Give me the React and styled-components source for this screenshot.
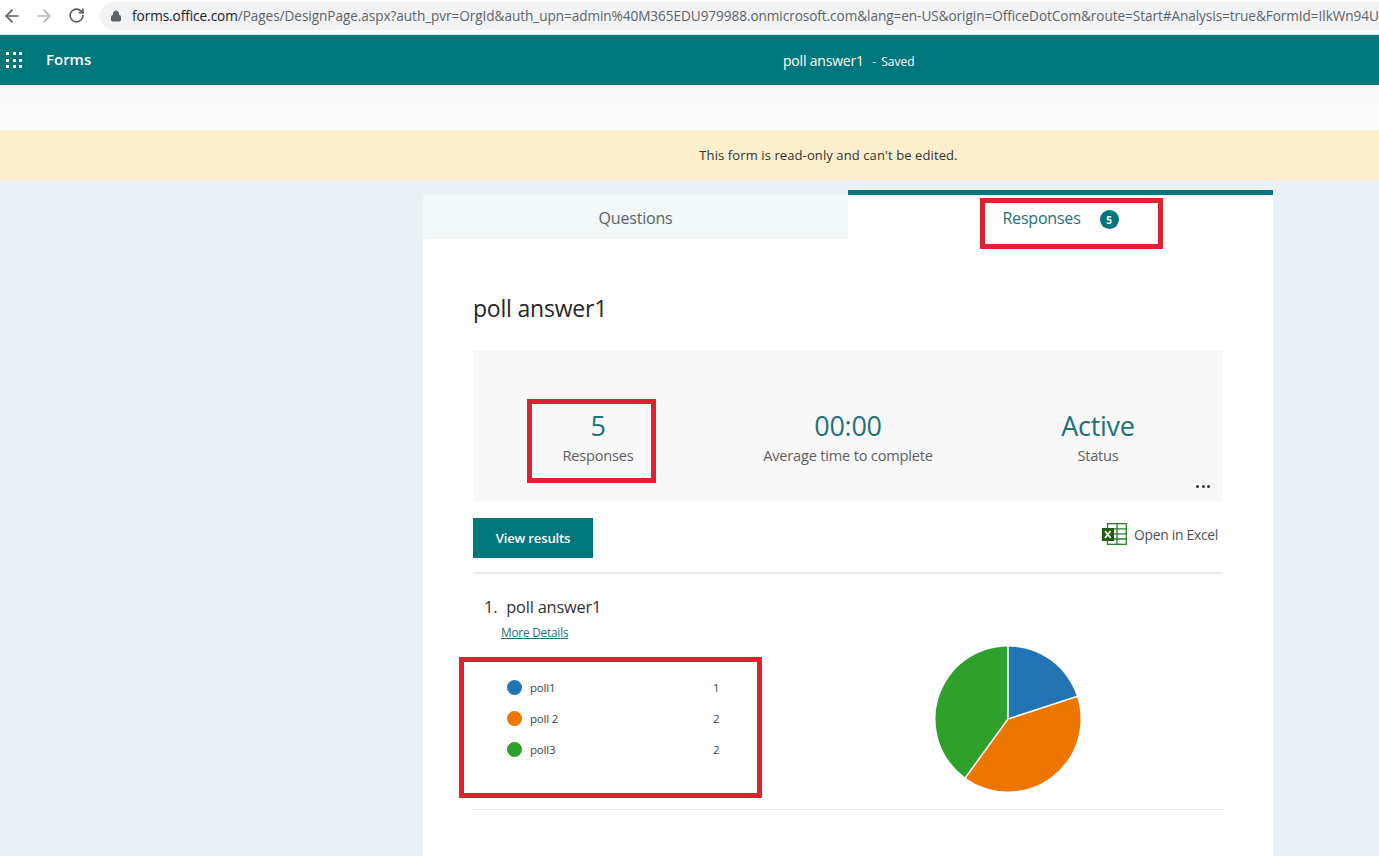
import React from "react";
import styled, { createGlobalStyle } from "styled-components";
import { ArrowLeft, ArrowRight, RotateCw, Lock } from "lucide-react";

const TEAL = "#02777b";

const GlobalStyle = createGlobalStyle`
  html, body {
    margin: 0;
    padding: 0;
    background: #e9f1f4;
    overflow: hidden;
  }
  * {
    box-sizing: border-box;
  }
  body {
    font-family: "Open Sans", "Noto Sans", "Liberation Sans", sans-serif;
  }
`;

const Page = styled.div`
  position: relative;
  width: 1379px;
  height: 856px;
  overflow: hidden;
  background: #e9f1f4;
`;

const BrowserBar = styled.div`
  height: 35px;
  background: #fff;
  display: flex;
  align-items: center;
  padding: 0 0 3px 0;
  border-bottom: 1px solid #dfe8e8;
`;

const NavButton = styled.div`
  width: 32px;
  display: flex;
  justify-content: center;
  color: ${(p) => (p.$off ? "#b4b6b8" : "#5a5e62")};
  &:first-child {
    margin-left: -4px;
  }
`;

const UrlPill = styled.div`
  flex: 1;
  min-width: 0;
  margin-left: 8px;
  height: 28px;
  border-radius: 14px 0 0 14px;
  background: #f1f3f4;
  display: flex;
  align-items: center;
  padding-left: 10px;
  gap: 10px;
  color: #5f6368;
  overflow: hidden;
  svg {
    flex-shrink: 0;
  }
`;

const UrlText = styled.div`
  font-size: 13.6px;
  letter-spacing: -0.06px;
  white-space: nowrap;
  color: #5f6368;
  span {
    color: #202124;
  }
`;

const Header = styled.header`
  height: 50px;
  background: ${TEAL};
  color: #fff;
  display: grid;
  grid-template-columns: 46px 1fr;
  align-items: center;
  position: relative;
`;

const Waffle = styled.div`
  margin-left: 6px;
  width: 16px;
  display: grid;
  grid-template-columns: repeat(3, 3px);
  grid-auto-rows: 3px;
  gap: 3.5px;
  i {
    background: #fff;
    display: block;
  }
`;

const Brand = styled.div`
  font-size: 15px;
  font-weight: 600;
  margin-top: -2px;
`;

const FormTitle = styled.div`
  position: absolute;
  left: 783px;
  top: 16px;
  font-size: 14px;
  letter-spacing: -0.2px;
  white-space: nowrap;
  small {
    font-size: 12px;
    margin-left: 5px;
    letter-spacing: 0;
    word-spacing: 2px;
  }
`;

const SubBar = styled.div`
  height: 45px;
  background: linear-gradient(#fafafa, #fcfcfc);
`;

const Notice = styled.div`
  height: 50px;
  background: #fdefcc;
  display: flex;
  align-items: center;
  justify-content: center;
  padding-left: 278px;
  font-size: 13px;
  letter-spacing: 0.1px;
  color: #333;
`;

const Card = styled.main`
  width: 850px;
  margin: 10px 0 0 423px;
  background: #fff;
  height: 700px;
`;

const Tabs = styled.div`
  display: grid;
  grid-template-columns: 425px 425px;
  height: 49px;
  background: #e9f1f4;
`;

const Tab = styled.div`
  background: ${(p) => (p.$active ? "#fff" : "#f2f7f8")};
  margin-top: ${(p) => (p.$active ? 0 : "5px")};
  border-top: ${(p) => (p.$active ? `5px solid ${TEAL}` : "none")};
  color: ${(p) => (p.$active ? "#1d7377" : "#5c6466")};
  font-size: 16px;
  letter-spacing: -0.2px;
  display: flex;
  align-items: flex-start;
  justify-content: center;
  padding-top: 12px;
  gap: 19px;
`;

const Badge = styled.span`
  width: 19px;
  height: 19px;
  margin-top: 3px;
  border-radius: 50%;
  background: ${TEAL};
  color: #fff;
  font-size: 10px;
  font-weight: 700;
  letter-spacing: 0;
  display: flex;
  align-items: center;
  justify-content: center;
`;

const Body = styled.div`
  padding: 0 50px;
`;

const Title = styled.h1`
  margin: 0;
  padding-top: 52px;
  height: 112px;
  font-size: 23px;
  line-height: 34px;
  font-weight: 400;
  letter-spacing: -0.2px;
  color: #252525;
`;

const Summary = styled.section`
  position: relative;
  height: 150px;
  background: #f8f8f8;
  display: grid;
  grid-template-columns: repeat(3, 1fr);
  padding-top: 57px;
`;

const Stat = styled.div`
  text-align: center;
`;

const StatValue = styled.div`
  font-size: 27px;
  line-height: 36px;
  letter-spacing: -0.3px;
  color: #1d7377;
`;

const StatLabel = styled.div`
  font-size: 14.6px;
  line-height: 22px;
  letter-spacing: -0.2px;
  color: #5f5f5f;
`;

const MoreDots = styled.div`
  position: absolute;
  right: 13px;
  bottom: 13px;
  display: flex;
  gap: 2.5px;
  i {
    width: 3px;
    height: 3px;
    border-radius: 50%;
    background: #333;
  }
`;

const ActionRow = styled.div`
  height: 73px;
  padding-top: 17px;
  display: flex;
  justify-content: space-between;
  align-items: flex-start;
  border-bottom: 2px solid #e8e8e8;
`;

const ViewButton = styled.button`
  width: 120px;
  height: 40px;
  border: 0;
  background: ${TEAL};
  color: #fff;
  font: 600 13.2px "Open Sans", sans-serif;
  letter-spacing: -0.2px;
`;

const ExcelLink = styled.div`
  display: flex;
  align-items: center;
  gap: 7px;
  padding: 5px 5px 0 0;
  font-size: 13.8px;
  letter-spacing: -0.25px;
  color: #4f4f4f;
`;

const Question = styled.div`
  padding: 21px 0 0 11px;
  font-size: 16.4px;
  line-height: 24px;
  letter-spacing: -0.2px;
  color: #333;
  span {
    margin-right: 9px;
  }
`;

const DetailsLink = styled.a`
  display: block;
  margin: 5px 0 1px 17px;
  font-size: 11.8px;
  line-height: 16px;
  letter-spacing: -0.2px;
  color: #1d7377;
  text-decoration: underline;
`;

const ResultRow = styled.div`
  display: grid;
  grid-template-columns: 375px 1fr;
  height: 169px;
  border-bottom: 1px solid #e8e8e8;
`;

const Legend = styled.ul`
  list-style: none;
  margin: 0;
  padding: 31px 0 0 34px;
`;

const LegendItem = styled.li`
  display: grid;
  grid-template-columns: 23px 1fr 14px;
  align-items: center;
  height: 31px;
  width: 220px;
  font-size: 11.5px;
  letter-spacing: -0.2px;
  color: #444;
`;

const Dot = styled.i`
  width: 15px;
  height: 15px;
  border-radius: 50%;
  background: ${(p) => p.$color};
`;

const PieWrap = styled.div`
  padding: 4px 0 0 86px;
`;

const Annotation = styled.div`
  position: absolute;
  border: 5px solid #dd2230;
  pointer-events: none;
  left: ${(p) => p.$x}px;
  top: ${(p) => p.$y}px;
  width: ${(p) => p.$w}px;
  height: ${(p) => p.$h}px;
`;

const legendData = [
  { label: "poll1", count: 1, color: "#2274b5" },
  { label: "poll 2", count: 2, color: "#ec7600" },
  { label: "poll3", count: 2, color: "#2ea02c" },
];

function Pie() {
  return (
    <svg width="148" height="148" viewBox="-74 -74 148 148">
      <path d="M0 0 L0 -72.5 A72.5 72.5 0 0 1 68.95 -22.4 Z" fill="#2274b5" />
      <path d="M0 0 L68.95 -22.4 A72.5 72.5 0 0 1 -42.6 58.65 Z" fill="#ec7600" />
      <path d="M0 0 L-42.6 58.65 A72.5 72.5 0 0 1 0 -72.5 Z" fill="#2ea02c" />
      <g stroke="#fff" strokeWidth="1.6">
        <line x1="0" y1="0" x2="0" y2="-74" />
        <line x1="0" y1="0" x2="70.4" y2="-22.9" />
        <line x1="0" y1="0" x2="-43.5" y2="59.9" />
      </g>
    </svg>
  );
}

function ExcelIcon() {
  return (
    <svg width="25" height="22" viewBox="0 0 25 22">
      <rect x="5.5" y="0.7" width="18.8" height="20.6" fill="#fff" stroke="#2b7a2b" strokeWidth="1.3" />
      <path d="M5 5.8h19M5 10.9h19M5 16h19M15 1v20" stroke="#2b7a2b" strokeWidth="1.3" fill="none" />
      <rect x="0" y="5" width="12" height="13" fill="#1e5c12" />
      <path d="M3 8l5.6 7M8.6 8L3 15" stroke="#fff" strokeWidth="1.8" fill="none" />
    </svg>
  );
}

export default function App() {
  return (
    <Page>
      <GlobalStyle />
      <BrowserBar>
        <NavButton>
          <ArrowLeft size={20} />
        </NavButton>
        <NavButton $off>
          <ArrowRight size={20} />
        </NavButton>
        <NavButton>
          <RotateCw size={17} strokeWidth={2.4} />
        </NavButton>
        <UrlPill>
          <Lock size={12} fill="#5f6368" />
          <UrlText>
            <span>forms.office.com</span>
            /Pages/DesignPage.aspx?auth_pvr=OrgId&auth_upn=admin%40M365EDU979988.onmicrosoft.com&lang=en-US&origin=OfficeDotCom&route=Start#Analysis=true&FormId=IlkWn94UI
          </UrlText>
        </UrlPill>
      </BrowserBar>
      <Header>
        <Waffle>
          {Array.from({ length: 9 }, (_, i) => (
            <i key={i} />
          ))}
        </Waffle>
        <Brand>Forms</Brand>
        <FormTitle>
          poll answer1 <small>- Saved</small>
        </FormTitle>
      </Header>
      <SubBar />
      <Notice>This form is read-only and can't be edited.</Notice>
      <Card>
        <Tabs>
          <Tab>Questions</Tab>
          <Tab $active>
            Responses <Badge>5</Badge>
          </Tab>
        </Tabs>
        <Body>
          <Title>poll answer1</Title>
          <Summary>
            <Stat>
              <StatValue>5</StatValue>
              <StatLabel>Responses</StatLabel>
            </Stat>
            <Stat>
              <StatValue>00:00</StatValue>
              <StatLabel>Average time to complete</StatLabel>
            </Stat>
            <Stat>
              <StatValue>Active</StatValue>
              <StatLabel>Status</StatLabel>
            </Stat>
            <MoreDots>
              <i />
              <i />
              <i />
            </MoreDots>
          </Summary>
          <ActionRow>
            <ViewButton>View results</ViewButton>
            <ExcelLink>
              <ExcelIcon />
              Open in Excel
            </ExcelLink>
          </ActionRow>
          <Question>
            <span>1.</span>poll answer1
            <DetailsLink>More Details</DetailsLink>
          </Question>
          <ResultRow>
            <Legend>
              {legendData.map((item) => (
                <LegendItem key={item.label}>
                  <Dot $color={item.color} />
                  {item.label}
                  <span>{item.count}</span>
                </LegendItem>
              ))}
            </Legend>
            <PieWrap>
              <Pie />
            </PieWrap>
          </ResultRow>
        </Body>
      </Card>
      <Annotation $x={980} $y={198} $w={183} $h={51} />
      <Annotation $x={527} $y={399} $w={129} $h={84} />
      <Annotation $x={459} $y={657} $w={303} $h={141} />
    </Page>
  );
}
